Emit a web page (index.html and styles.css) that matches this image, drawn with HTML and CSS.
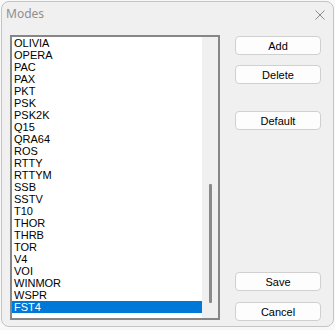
FILE: index.html
```html
<!DOCTYPE html>
<html lang="en">
<head>
  <meta charset="UTF-8">
  <meta name="viewport" content="width=device-width, initial-scale=1.0">
  <title>Modes</title>
  <link rel="stylesheet" href="styles.css">
</head>
<body>
  <div class="dialog">
    <div class="titlebar">
      <span class="title">Modes</span>
      <svg class="close" width="10" height="10" viewBox="0 0 10 10">
        <path d="M0.5 0.5 L9.5 9.5 M9.5 0.5 L0.5 9.5" stroke="#8a8a8a" stroke-width="1" fill="none"/>
      </svg>
    </div>
    <div class="content">
      <div class="listbox">
        <ul class="items">
          <li>OLIVIA</li>
          <li>OPERA</li>
          <li>PAC</li>
          <li>PAX</li>
          <li>PKT</li>
          <li>PSK</li>
          <li>PSK2K</li>
          <li>Q15</li>
          <li>QRA64</li>
          <li>ROS</li>
          <li>RTTY</li>
          <li>RTTYM</li>
          <li>SSB</li>
          <li>SSTV</li>
          <li>T10</li>
          <li>THOR</li>
          <li>THRB</li>
          <li>TOR</li>
          <li>V4</li>
          <li>VOI</li>
          <li>WINMOR</li>
          <li>WSPR</li>
          <li class="selected">FST4</li>
        </ul>
        <div class="scrollbar">
          <div class="thumb"></div>
        </div>
      </div>
      <div class="buttons">
        <button class="btn btn-add">Add</button>
        <button class="btn btn-delete">Delete</button>
        <button class="btn btn-default">Default</button>
        <button class="btn btn-save">Save</button>
        <button class="btn btn-cancel">Cancel</button>
      </div>
    </div>
  </div>
</body>
</html>
```

FILE: styles.css
```css
html, body {
    margin: 0;
    padding: 0;
    background-color: #f8f8f8;
}

body {
    font-family: "Liberation Sans", Arial, sans-serif;
    font-size: 11px;
}

.dialog {
    box-sizing: border-box;
    width: 333px;
    height: 326px;
    margin: 1px 0 0 1px;
    background-color: #f0f0f0;
    border: 1px solid #c4c4c4;
    border-radius: 8px;
    display: flex;
    flex-direction: column;
}

.titlebar {
    box-sizing: border-box;
    height: 33px;
    padding: 4px 8px 0 4px;
    display: flex;
    justify-content: space-between;
    align-items: flex-start;
}

.title {
    font-family: "Noto Sans", sans-serif;
    font-size: 12px;
    line-height: 16px;
    color: #8f8f8f;
}

.close {
    margin-top: 4px;
}

.content {
    display: flex;
    height: 286px;
    padding-left: 8px;
}

.listbox {
    box-sizing: border-box;
    width: 210px;
    height: 285px;
    border: 2px solid #868686;
    background-color: #fff;
    display: flex;
}

.items {
    list-style: none;
    margin: 0;
    padding: 0;
    width: 190px;
}

.items li {
    height: 12px;
    line-height: 12px;
    padding-left: 2px;
    color: #000;
    white-space: nowrap;
}

.items li.selected {
    background-color: #0078d7;
    color: #fff;
}

.scrollbar {
    width: 16px;
    background-color: #f0f0f0;
}

.thumb {
    width: 3px;
    height: 119px;
    margin: 147px 0 0 7px;
    background-color: #8a8a8a;
    border-radius: 1px;
}

.buttons {
    box-sizing: border-box;
    display: flex;
    flex-direction: column;
    width: 86px;
    height: 286px;
    margin-left: 15px;
    padding-top: 1px;
}

.btn {
    box-sizing: border-box;
    height: 19px;
    padding: 0;
    font-family: "Liberation Sans", Arial, sans-serif;
    font-size: 11px;
    color: #000;
    background-color: #fdfdfd;
    border: 1px solid #d0d0d0;
    border-radius: 4px;
}

.btn-delete {
    margin-top: 10px;
}

.btn-default {
    margin-top: 27px;
}

.btn-save {
    margin-top: auto;
}

.btn-cancel {
    margin-top: 11px;
}
```
